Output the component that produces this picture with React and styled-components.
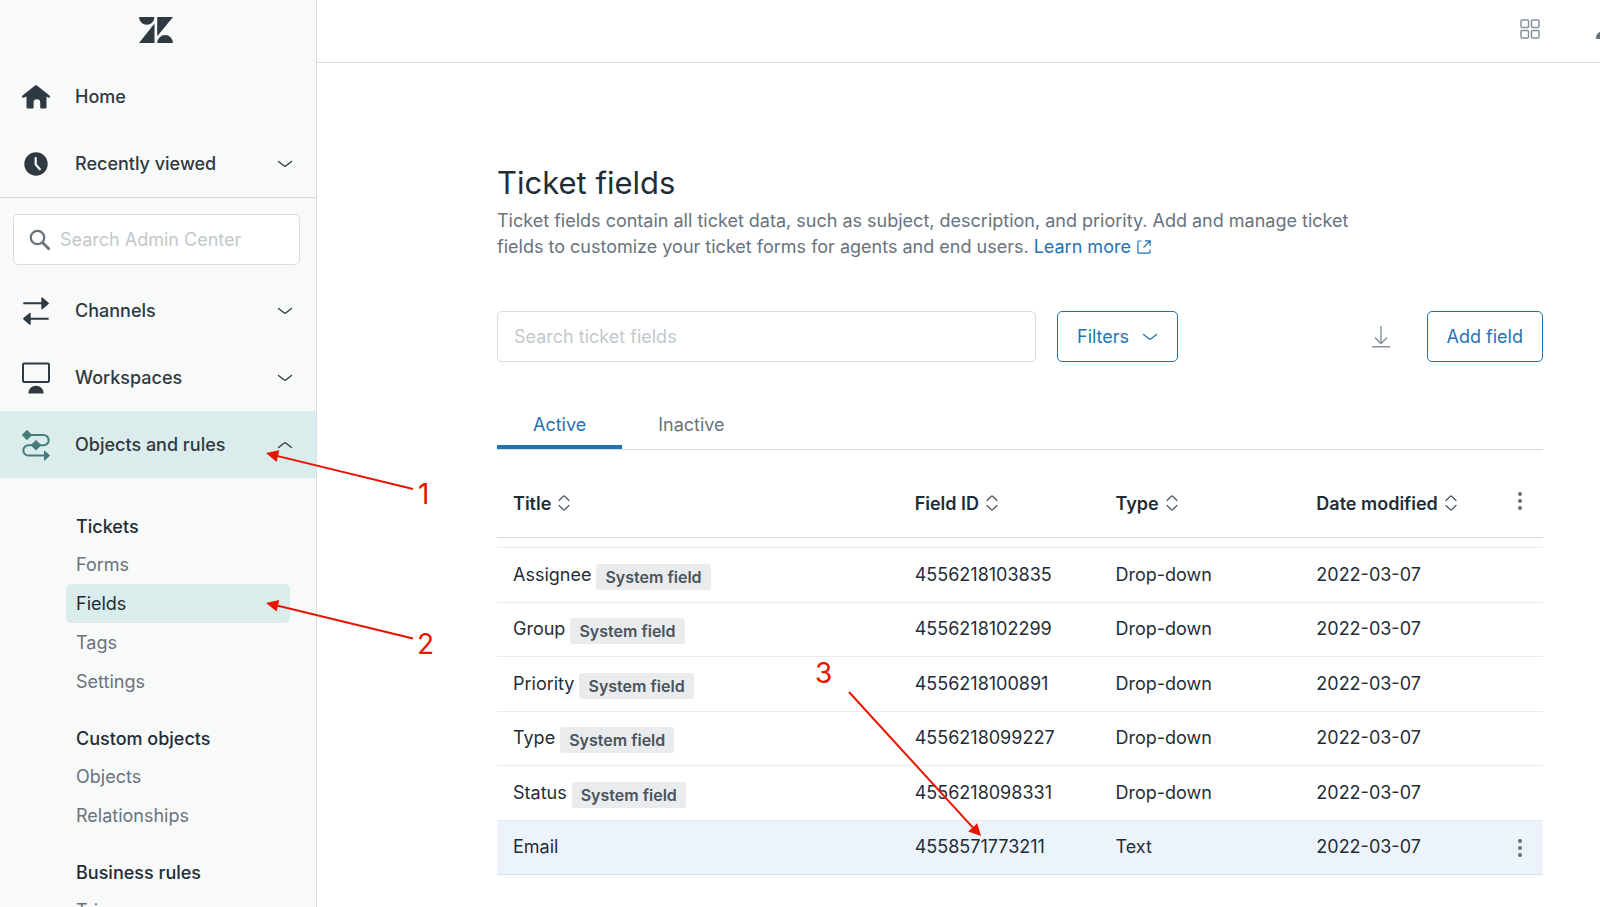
import React, { useState } from "react";
import styled, { createGlobalStyle, css } from "styled-components";

const mainNav = [
  { name: "Channels", icon: "channels" },
  { name: "Workspaces", icon: "workspaces" },
  { name: "Objects and rules", icon: "rules" },
];

const subNav = [
  { title: "Tickets", links: ["Forms", "Fields", "Tags", "Settings"] },
  { title: "Custom objects", links: ["Objects", "Relationships"] },
  { title: "Business rules", links: ["Triggers"] },
];

const columns = ["Title", "Field ID", "Type", "Date modified"];

const fields = [
  { title: "Assignee", id: "4556218103835", type: "Drop-down", date: "2022-03-07", system: true },
  { title: "Group", id: "4556218102299", type: "Drop-down", date: "2022-03-07", system: true },
  { title: "Priority", id: "4556218100891", type: "Drop-down", date: "2022-03-07", system: true },
  { title: "Type", id: "4556218099227", type: "Drop-down", date: "2022-03-07", system: true },
  { title: "Status", id: "4556218098331", type: "Drop-down", date: "2022-03-07", system: true },
  { title: "Email", id: "4558571773211", type: "Text", date: "2022-03-07", system: false },
];

// arrows: line start, tip, and the two back corners of the head
const notes = [
  { label: "1", x: 418, y: 504, from: [413, 489], tip: [266, 453], a: [279.3, 450.3], b: [276.6, 462] },
  { label: "2", x: 417, y: 654, from: [413, 638.5], tip: [266, 603], a: [279.3, 600], b: [276.6, 611.5] },
  { label: "3", x: 815, y: 683, from: [849, 692], tip: [981, 836], a: [977.2, 823.3], b: [968.2, 831.5] },
];

const Chevron = ({ up }) => (
  <svg width="16" height="8" viewBox="0 0 16 8" fill="none" stroke="currentColor" strokeWidth="1.3" strokeLinecap="round" strokeLinejoin="round">
    <path d={up ? "M1.5 6.6 7.3 2a1.1 1.1 0 0 1 1.4 0l5.8 4.6" : "M1.5 1.4 7.3 6a1.1 1.1 0 0 0 1.4 0l5.8-4.6"} />
  </svg>
);

const Sort = () => (
  <svg width="12" height="16" viewBox="0 0 12 16" fill="none" stroke="#49545c" strokeWidth="1.2" strokeLinecap="round" strokeLinejoin="round">
    <path d="M1 5.5 5.4 1.2a.9.9 0 0 1 1.2 0L11 5.5M1 10.5l4.4 4.3a.9.9 0 0 0 1.2 0l4.4-4.3" />
  </svg>
);

const Dots = () => (
  <svg width="6" height="20" viewBox="0 0 6 20" fill="#68737d">
    <circle cx="3" cy="3" r="2.1" />
    <circle cx="3" cy="10" r="2.1" />
    <circle cx="3" cy="17" r="2.1" />
  </svg>
);

const icons = {
  home: (
    <path d="M13.1 2.4a1.4 1.4 0 0 1 1.8 0l12.6 10.2a1.2 1.2 0 0 1-1.5 1.9l-1.5-1.1v11.1a1 1 0 0 1-1 1h-4.3a1 1 0 0 1-1-1v-5a3.3 3.3 0 0 0-6.6 0v5a1 1 0 0 1-1 1H5.5a1 1 0 0 1-1-1V13.4L2 14.5a1.2 1.2 0 0 1-1.5-1.9z" />
  ),
  recent: (
    <>
      <circle cx="14" cy="14" r="11.7" />
      <path d="M13.7 8v6.5l4.1 4.7" fill="none" stroke="#f8f9f9" strokeWidth="2.2" strokeLinecap="round" strokeLinejoin="round" />
    </>
  ),
  channels: (
    <>
      <path d="M1.3 6.3h19M8 21.8h18.7" stroke="currentColor" strokeWidth="2" />
      <path d="M19.3 1.2c0-.9.8-1.1 1.4-.5l5.9 5a1 1 0 0 1 0 1.4l-5.9 5c-.6.6-1.4.4-1.4-.5zM8.7 16.7c0-.9-.8-1.1-1.4-.5l-5.9 4.9a1 1 0 0 0 0 1.4l5.9 4.9c.6.6 1.4.4 1.4-.5z" />
    </>
  ),
  workspaces: (
    <>
      <rect x="1" y="-.5" width="26" height="18.5" rx="1.2" fill="none" stroke="currentColor" strokeWidth="2" />
      <path d="M6.5 29.5v-1a7.5 6.8 0 0 1 15 0v1z" />
    </>
  ),
  rules: (
    <>
      <path d="M5 4h16.5a5.1 5.1 0 0 1 0 10.3h-15a5.1 5.1 0 0 0 0 10.3H23" fill="none" stroke="currentColor" strokeWidth="2" />
      <path
        d="M5-.7 9.7 4 5 8.7.3 4zM14 9.5l4.8 4.7-4.8 4.8-4.8-4.8zM22.5 20l5 4.6-5 4.7z"
        stroke="currentColor"
        strokeLinejoin="round"
      />
    </>
  ),
};

const NavIcon = ({ name }) => (
  <svg width="28" height="28" viewBox="0 0 28 28" fill="currentColor" overflow="visible">
    {icons[name]}
  </svg>
);

const App = () => {
  const [adminSearch, setAdminSearch] = useState("");
  const [search, setSearch] = useState("");
  const [tab, setTab] = useState("Active");

  return (
    <Page>
      <GlobalStyle />
      <Sidebar>
        <LogoBar>
          <svg width="34" height="26" viewBox="0 0 34 26" fill="#2f3941">
            <path d="M0 0h15.5a7.75 7.75 0 0 1-15.5 0zM15.5 6.5V26H0zM18.2 0H34L18.2 19.3zM18.2 26a7.9 7.9 0 0 1 15.8 0z" />
          </svg>
        </LogoBar>
        <NavItem>
          <NavIcon name="home" />
          <NavName>Home</NavName>
        </NavItem>
        <NavItem>
          <NavIcon name="recent" />
          <NavName>Recently viewed</NavName>
          <Chevron />
        </NavItem>
        <AdminSearch>
          <svg width="22" height="22" viewBox="0 0 22 22" fill="none" stroke="#68737d">
            <circle cx="8.5" cy="8.5" r="6.7" strokeWidth="2.3" />
            <path d="m13.5 13.5 7 7" strokeWidth="2.8" />
          </svg>
          <AdminInput
            aria-label="Search Admin Center"
            placeholder="Search Admin Center"
            value={adminSearch}
            onChange={e => setAdminSearch(e.target.value)}
          />
        </AdminSearch>
        {mainNav.map(item => {
          const open = item.icon === "rules";
          return (
            <NavItem key={item.name} $open={open} aria-expanded={open}>
              <NavIcon name={item.icon} />
              <NavName>{item.name}</NavName>
              <Chevron up={open} />
            </NavItem>
          );
        })}
        <SubNav>
          {subNav.map(group => (
            <section key={group.title}>
              <SubTitle>{group.title}</SubTitle>
              {group.links.map(link => (
                <SubLink key={link} href="#" $active={link === "Fields"}>
                  {link}
                </SubLink>
              ))}
            </section>
          ))}
        </SubNav>
      </Sidebar>

      <Main>
        <TopBar>
          <IconButton aria-label="Products">
            <svg width="20" height="20" viewBox="0 0 20 20" fill="none" stroke="#87929d" strokeWidth="1.5">
              <rect x="1" y="1" width="7.5" height="7.5" rx="1" />
              <rect x="11.5" y="1" width="7.5" height="7.5" rx="1" />
              <rect x="1" y="11.5" width="7.5" height="7.5" rx="1" />
              <rect x="11.5" y="11.5" width="7.5" height="7.5" rx="1" />
            </svg>
          </IconButton>
          <IconButton aria-label="Profile">
            <svg width="24" height="24" viewBox="0 0 24 24" fill="#68737d">
              <circle cx="12" cy="7" r="6" />
              <path d="M0 21c0-5 5-8 12-8s12 3 12 8c0 .6-.4 1-1 1H1c-.6 0-1-.4-1-1z" />
            </svg>
          </IconButton>
        </TopBar>
        <Content>
          <Heading>Ticket fields</Heading>
          <Description>
            Ticket fields contain all ticket data, such as subject, description, and priority. Add and
            manage ticket fields to customize your ticket forms for agents and end users.{" "}
            <LearnMore href="#">
              Learn more
              <svg width="14" height="14" viewBox="0 0 14 14" fill="none" stroke="currentColor" strokeWidth="1.2">
                <path d="M4.5 1h-3a.6.6 0 0 0-.6.6v10.9c0 .3.3.6.6.6h10.9c.3 0 .6-.3.6-.6v-3M8 .8h5.2V6M13 1 6.5 7.5" />
              </svg>
            </LearnMore>
          </Description>

          <Toolbar>
            <SearchInput
              aria-label="Search ticket fields"
              placeholder="Search ticket fields"
              value={search}
              onChange={e => setSearch(e.target.value)}
            />
            <Button>
              Filters
              <Chevron />
            </Button>
            <Actions>
              <IconButton aria-label="Download">
                <svg width="18" height="22" viewBox="0 0 18 22" fill="none" stroke="#87929d" strokeWidth="1.4">
                  <path d="M9 0v17.5M3 11.5l5.5 5.7c.3.3.7.3 1 0l5.5-5.7M0 20.8h18" />
                </svg>
              </IconButton>
              <Button>Add field</Button>
            </Actions>
          </Toolbar>

          <Tabs role="tablist">
            {["Active", "Inactive"].map(name => (
              <Tab key={name} role="tab" aria-selected={tab === name} $active={tab === name} onClick={() => setTab(name)}>
                {name}
              </Tab>
            ))}
          </Tabs>

          <Table>
            <thead>
              <tr>
                {columns.map(col => (
                  <HeadCell key={col} $wide={col === "Title"}>
                    <SortButton>
                      {col}
                      <Sort />
                    </SortButton>
                  </HeadCell>
                ))}
                <HeadCell $menu>
                  <IconButton aria-label="Columns">
                    <Dots />
                  </IconButton>
                </HeadCell>
              </tr>
            </thead>
            <tbody>
              <ScrolledRow aria-hidden="true">
                <td colSpan={5} />
              </ScrolledRow>
              {fields.map(field => (
                <Row key={field.id} $selected={!field.system}>
                  <Cell>
                    {field.title}
                    {field.system && <Tag>System field</Tag>}
                  </Cell>
                  <Cell>{field.id}</Cell>
                  <Cell>{field.type}</Cell>
                  <Cell>{field.date}</Cell>
                  <Cell>
                    {!field.system && (
                      <IconButton aria-label="Field options">
                        <Dots />
                      </IconButton>
                    )}
                  </Cell>
                </Row>
              ))}
            </tbody>
          </Table>
        </Content>
      </Main>

      <Notes>
        {notes.map(({ label, x, y, from, tip, a, b }) => (
          <g key={label}>
            <path d={`M${from} L${(a[0] + b[0]) / 2},${(a[1] + b[1]) / 2}`} stroke="#e81400" strokeWidth="2" />
            <path d={`M${tip} L${a} L${b}z`} />
            <text x={x} y={y}>{label}</text>
          </g>
        ))}
      </Notes>
    </Page>
  );
};

export default App;

const GlobalStyle = createGlobalStyle`
  * {
    box-sizing: border-box;
  }

  body {
    margin: 0;
    background-color: #fff;
  }

  body, button, input {
    font-family: Inter, "Liberation Sans", sans-serif;
    font-size: 18px;
    color: #1f2d38;
  }

  button {
    background: none;
    border: none;
    padding: 0;
    cursor: pointer;
  }

  svg {
    flex-shrink: 0;
  }
`;

const Page = styled.div`
  position: relative;
  display: flex;
  height: 100vh;
  overflow: hidden;
`;

const Sidebar = styled.nav`
  width: 317px;
  flex-shrink: 0;
  background-color: #f8f9f9;
  border-right: 1px solid #d8dcde;
  overflow: hidden;
`;

const LogoBar = styled.div`
  height: 63px;
  display: flex;
  justify-content: center;
  padding: 17px 4px 0 0;
`;

const NavItem = styled.button`
  width: 100%;
  height: 67px;
  display: flex;
  align-items: center;
  padding: 0 23px 0 22px;
  color: #2f3941;

  ${({ $open }) => $open && css`
    background-color: #daeceb;

    > svg:first-child {
      color: #467b7c;
    }
  `}
`;

const NavName = styled.span`
  flex: 1;
  margin-left: 25px;
  text-align: left;
  font-weight: 500;
`;

const AdminSearch = styled.div`
  border-top: 1px solid #d8dcde;
  padding: 16px 16px 12px 13px;
  display: flex;
  align-items: center;

  svg {
    margin: 0 -38px 0 16px;
    z-index: 1;
  }
`;

const AdminInput = styled.input`
  flex: 1;
  min-width: 0;
  height: 51px;
  padding: 0 16px 0 46px;
  background-color: #fff;
  border: 1px solid #d8dcde;
  border-radius: 5px;

  &::placeholder {
    color: #c2c8cc;
  }
`;

const SubNav = styled.div`
  display: flex;
  flex-direction: column;
  gap: 20px;
  padding: 31px 26px 0 66px;
`;

const SubTitle = styled.h2`
  margin: 0;
  padding-left: 10px;
  font-size: 18px;
  font-weight: 500;
  line-height: 36px;
`;

const SubLink = styled.a`
  display: block;
  padding-left: 10px;
  line-height: 39px;
  border-radius: 5px;
  text-decoration: none;
  color: ${({ $active }) => ($active ? "#1f2d38" : "#68737d")};
  background-color: ${({ $active }) => ($active ? "#daeceb" : "transparent")};
`;

const Main = styled.main`
  flex: 1;
  min-width: 0;
`;

const TopBar = styled.header`
  height: 63px;
  display: flex;
  align-items: center;
  justify-content: flex-end;
  gap: 56px;
  margin-right: -20px;
  padding-bottom: 4px;
  border-bottom: 1px solid #d8dcde;
`;

const IconButton = styled.button`
  display: inline-flex;
  align-items: center;
  justify-content: center;
`;

const Content = styled.div`
  padding: 100px 57px 0 180px;
`;

const Heading = styled.h1`
  margin: 0;
  font-size: 31px;
  font-weight: 400;
  line-height: 40px;
`;

const Description = styled.p`
  max-width: 870px;
  margin: 5px 0 51px;
  line-height: 26px;
  color: #68737d;
`;

const LearnMore = styled.a`
  color: #1f73b7;
  text-decoration: none;

  svg {
    margin-left: 6px;
    vertical-align: -1px;
  }
`;

const Toolbar = styled.div`
  display: flex;
  gap: 21px;
`;

const SearchInput = styled.input`
  width: 539px;
  height: 51px;
  padding: 0 16px;
  border: 1px solid #d8dcde;
  border-radius: 5px;

  &::placeholder {
    color: #c2c8cc;
  }
`;

const Button = styled.button`
  height: 51px;
  display: flex;
  align-items: center;
  gap: 13px;
  padding: 0 19px;
  border: 1px solid #1f73b7;
  border-radius: 5px;
  color: #1f73b7;
`;

const Actions = styled.div`
  margin-left: auto;
  display: flex;
  gap: 37px;
`;

const Tabs = styled.div`
  display: flex;
  margin: 38px 0 19px;
  border-bottom: 1px solid #d8dcde;
`;

const Tab = styled.button`
  height: 49px;
  padding: 4px 36px 0;
  border-bottom: 4px solid ${({ $active }) => ($active ? "#1f73b7" : "transparent")};
  color: ${({ $active }) => ($active ? "#1f73b7" : "#68737d")};
`;

const Table = styled.table`
  width: 100%;
  height: 406px;
  table-layout: fixed;
  border-collapse: separate;
  border-spacing: 0;
`;

const HeadCell = styled.th`
  width: ${({ $wide, $menu }) => ($menu ? "auto" : $wide ? "38.4%" : "19.2%")};
  height: 69px;
  padding: 0 0 0 16px;
  text-align: left;
  border-bottom: 1px solid #d8dcde;
`;

const SortButton = styled.button`
  display: flex;
  align-items: center;
  gap: 7px;
  font-weight: 600;
`;

const ScrolledRow = styled.tr`
  td {
    height: 10px;
    padding: 0;
    border-bottom: 1px solid #e9ebed;
  }
`;

const Row = styled.tr`
  background-color: ${({ $selected }) => ($selected ? "#edf3fa" : "transparent")};

  td {
    border-bottom: 1px solid ${({ $selected }) => ($selected ? "#d5e4f0" : "#e9ebed")};
  }
`;

const Cell = styled.td`
  padding: 0 0 0 16px;
  line-height: 26px;
  white-space: nowrap;

  ${IconButton} {
    vertical-align: middle;
  }
`;

const Tag = styled.span`
  margin-left: 5px;
  padding: 3px 9px;
  border-radius: 3px;
  background-color: #e9ebed;
  color: #49545c;
  font-size: 16px;
  font-weight: 600;
  line-height: 20px;
  vertical-align: -2px;
`;

const Notes = styled.svg`
  position: absolute;
  inset: 0;
  width: 100%;
  height: 100%;
  pointer-events: none;
  fill: #e81400;

  text {
    font-size: 28px;
  }
`;
